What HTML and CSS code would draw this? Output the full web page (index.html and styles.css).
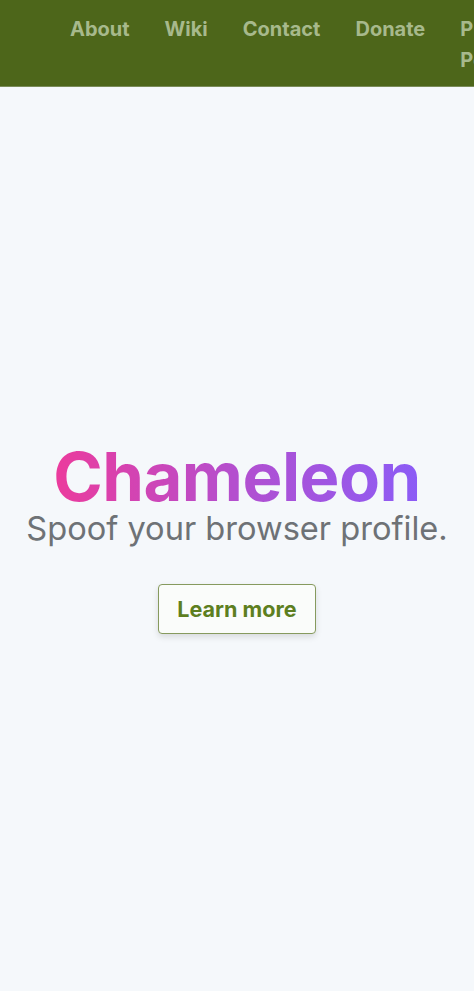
FILE: index.html
```html
<!DOCTYPE html>
<html lang="en">
<head>
<meta charset="utf-8">
<title>Chameleon</title>
<link rel="stylesheet" href="styles.css">
</head>
<body>
<header class="site-header">
  <nav class="nav">
    <a class="nav-link" href="#">About</a>
    <a class="nav-link" href="#">Wiki</a>
    <a class="nav-link" href="#">Contact</a>
    <a class="nav-link" href="#">Donate</a>
    <a class="nav-link" href="#">Privacy Policy</a>
  </nav>
</header>
<main class="hero">
  <h1 class="title">Chameleon</h1>
  <p class="subtitle">Spoof your browser profile.</p>
  <a class="btn" href="#">Learn more</a>
</main>
</body>
</html>
```
FILE: styles.css
```css
html, body {
  margin: 0;
  padding: 0;
}
body {
  font-family: Inter, "Noto Sans", sans-serif;
  background: #f5f8fb;
  min-height: 991px;
  overflow: hidden;
  width: 474px;
}
.site-header {
  background: #4d661a;
  height: 87px;
  box-sizing: border-box;
  padding-top: 14px;
  border-bottom: 1px solid #7a8c5a;
}
.nav {
  display: flex;
  gap: 35px;
  padding-left: 70px;
  width: max-content;
  max-width: 400px;
}
.nav-link {
  color: #a7b98c;
  font-weight: 700;
  font-size: 20px;
  line-height: 31px;
  text-decoration: none;
  flex-shrink: 0;
}
.nav-link:last-child {
  width: 14px;
  flex-shrink: 1;
}
.hero {
  height: 904px;
  display: flex;
  flex-direction: column;
  align-items: center;
  justify-content: center;
  text-align: center;
}
.title {
  margin: 0;
  font-size: 67px;
  font-weight: 700;
  line-height: 66px;
  letter-spacing: -0.5px;
  background: linear-gradient(90deg, #ec3b9c, #b34fcf 50%, #8b5cf6);
  -webkit-background-clip: text;
  background-clip: text;
  color: transparent;
  padding-bottom: 4px;
}
.subtitle {
  margin: -6px 0 0;
  font-size: 32.6px;
  color: #6e7276;
  line-height: 40px;
}
.btn {
  margin-top: 36px;
  display: inline-block;
  padding: 0 18px;
  height: 50px;
  line-height: 48px;
  box-sizing: border-box;
  border: 1px solid #869a5e;
  border-radius: 4px;
  color: #5d7f1f;
  font-weight: 700;
  font-size: 21.6px;
  text-decoration: none;
  background: #fafcfa;
  box-shadow: 0 3px 6px rgba(0,0,0,0.12);
}
```
